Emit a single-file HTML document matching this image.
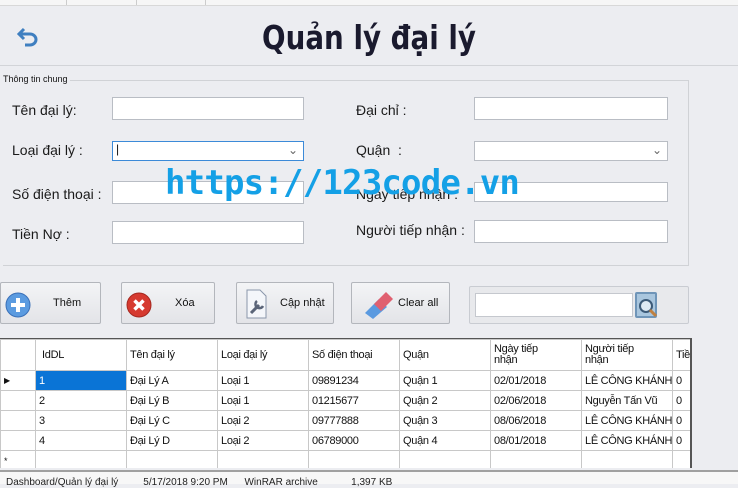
<!DOCTYPE html>
<html><head><meta charset="utf-8"><style>
*{box-sizing:border-box;margin:0;padding:0}
body{width:738px;height:484px;overflow:hidden;background:#ecedf1;font-family:"Liberation Sans","DejaVu Sans",sans-serif;position:relative;color:#111}
.a{position:absolute}
.tb{background:#fff;border:1px solid #b9bdc4;height:23px}
.lbl{font-size:14px;color:#1a1a1a}
.btn{position:absolute;top:282px;height:42px;border:1px solid #b3b6bc;border-radius:2px;background:linear-gradient(#f3f4f6,#e3e4e8);font-size:11px}
.btn span{position:absolute;top:14px}
table{border-collapse:collapse;font-size:11px;letter-spacing:-0.3px}
td{border:1px solid #c8c8c8;height:20px;padding:0 3px;white-space:nowrap;overflow:hidden}
</style></head><body>
<div class="a" style="left:0;top:0;width:738px;height:6px;background:#f6f6f6;border-bottom:1px solid #d8d8d8"></div>
<div class="a" style="left:66px;top:0;width:1px;height:5px;background:#ccc"></div>
<div class="a" style="left:136px;top:0;width:1px;height:5px;background:#ccc"></div>
<div class="a" style="left:205px;top:0;width:1px;height:5px;background:#ccc"></div>
<svg class="a" style="left:16px;top:25px" width="26" height="22" viewBox="0 0 26 22"><path d="M8 4 L3 9 L8 14 M3 9 H14 a6 5.5 0 0 1 0 11 H9" fill="none" stroke="#3f7fc0" stroke-width="3"/></svg>
<div class="a" style="left:0;width:738px;top:18px;text-align:center;font-family:'DejaVu Sans',sans-serif;font-weight:bold;font-size:33px;color:#1a1a2e;transform:scaleX(0.84)">Quản lý đại lý</div>
<div class="a" style="left:0;top:65px;width:738px;height:1px;background:#d2d4d8"></div>
<div class="a" style="left:3px;top:80px;width:686px;height:186px;border:1px solid #d0d2d6;border-left:none"></div>
<div class="a" style="left:3px;top:74px;font-size:9px;background:#ecedf1;padding-right:2px">Thông tin chung</div>

<div class="a lbl" style="left:12px;top:102px">Tên đại lý:</div>
<div class="a tb" style="left:112px;top:97px;width:192px"></div>
<div class="a lbl" style="left:12px;top:142px">Loại đại lý :</div>
<div class="a tb" style="left:112px;top:141px;width:192px;height:20px;border-color:#3c8ad8;font-size:12px;padding-left:3px">|<span style="position:absolute;right:5px;top:1px;color:#666">⌄</span></div>
<div class="a lbl" style="left:12px;top:186px">Số điện thoại :</div>
<div class="a tb" style="left:112px;top:181px;width:192px"></div>
<div class="a lbl" style="left:12px;top:226px">Tiền Nợ :</div>
<div class="a tb" style="left:112px;top:221px;width:192px"></div>

<div class="a lbl" style="left:356px;top:102px">Đại chỉ :</div>
<div class="a tb" style="left:474px;top:97px;width:194px"></div>
<div class="a lbl" style="left:356px;top:142px">Quận &nbsp;:</div>
<div class="a tb" style="left:474px;top:141px;width:194px;height:20px"><span style="position:absolute;right:5px;top:1px;color:#666;font-size:12px">⌄</span></div>
<div class="a lbl" style="left:356px;top:186px">Ngày tiếp nhận :</div>
<div class="a tb" style="left:474px;top:182px;width:194px;height:20px"></div>
<div class="a lbl" style="left:356px;top:222px">Người tiếp nhận :</div>
<div class="a tb" style="left:474px;top:220px;width:194px"></div>

<div class="a" style="left:165px;top:163px;font-family:'DejaVu Sans Mono',monospace;font-weight:bold;font-size:34px;color:#14a0e6;letter-spacing:-0.8px">https://123code.vn</div>

<div class="btn" style="left:0;width:101px"><svg class="a" style="left:4px;top:9px" width="26" height="26"><circle cx="13" cy="13" r="12" fill="#5b9be0" stroke="#3a70b8"/><path d="M13 6v14M6 13h14" stroke="#fff" stroke-width="4"/></svg><span style="left:52px">Thêm</span></div>
<div class="btn" style="left:121px;width:94px"><svg class="a" style="left:4px;top:9px" width="26" height="26"><circle cx="13" cy="13" r="12" fill="#d63a30" stroke="#a52820"/><path d="M8.5 8.5l9 9M17.5 8.5l-9 9" stroke="#fff" stroke-width="3.5"/></svg><span style="left:53px">Xóa</span></div>
<div class="btn" style="left:236px;width:98px"><svg class="a" style="left:7px;top:5px" width="26" height="32"><path d="M3 2h13l6 6v22H3z" fill="#f4f6fa" stroke="#8a96aa"/><path d="M7 25l8-8" stroke="#5a6478" stroke-width="3"/><path d="M13 13a4 4 0 1 0 6 5" stroke="#5a6478" stroke-width="2.5" fill="none"/></svg><span style="left:43px">Cập nhật</span></div>
<div class="btn" style="left:351px;width:99px"><svg class="a" style="left:10px;top:6px" width="34" height="30"><path d="M3 24l14-14 8 8-14 12z" fill="#5a9ae0"/><path d="M12 15l12-12 7 7-12 12z" fill="#e06070"/></svg><span style="left:46px">Clear all</span></div>
<div class="a" style="left:469px;top:286px;width:220px;height:38px;border:1px solid #c9ccd2;border-radius:2px;background:#e8e9ec"></div>
<div class="a" style="left:475px;top:293px;width:158px;height:24px;background:#fff;border:1px solid #c5c8ce"></div>
<svg class="a" style="left:634px;top:291px" width="28" height="30"><rect x="1" y="1" width="22" height="26" rx="2" fill="#6f95b8"/><rect x="3" y="3" width="18" height="22" fill="#a9c6de"/><circle cx="12" cy="15" r="6" fill="#dde9f3" stroke="#3c5a78" stroke-width="2"/><path d="M16 19l6 6" stroke="#c08040" stroke-width="3"/></svg>

<div class="a" style="left:0;top:338px;width:692px;height:130px;background:#fff;border-top:1px solid #555;border-right:2px solid #555;overflow:hidden">
<table style="width:700px;table-layout:fixed">
<colgroup><col style="width:35px"><col style="width:91px"><col style="width:91px"><col style="width:91px"><col style="width:91px"><col style="width:91px"><col style="width:91px"><col style="width:91px"><col style="width:30px"></colgroup>
<tr style="height:31px"><td></td><td style="padding-left:6px">IdDL</td><td>Tên đại lý</td><td>Loại đại lý</td><td>Số điện thoại</td><td>Quận</td><td style="line-height:11px;white-space:normal">Ngày tiếp<br>nhận</td><td style="line-height:11px;white-space:normal">Người tiếp<br>nhận</td><td>Tiền</td></tr>
<tr><td style="font-size:8px">▶</td><td style="background:#0a74d6;color:#fff">1</td><td>Đại Lý A</td><td>Loại 1</td><td>09891234</td><td>Quận 1</td><td>02/01/2018</td><td>LÊ CÔNG KHÁNH</td><td>0</td></tr>
<tr><td></td><td>2</td><td>Đại Lý B</td><td>Loại 1</td><td>01215677</td><td>Quận 2</td><td>02/06/2018</td><td>Nguyễn Tấn Vũ</td><td>0</td></tr>
<tr><td></td><td>3</td><td>Đại Lý C</td><td>Loại 2</td><td>09777888</td><td>Quận 3</td><td>08/06/2018</td><td>LÊ CÔNG KHÁNH</td><td>0</td></tr>
<tr><td></td><td>4</td><td>Đại Lý D</td><td>Loại 2</td><td>06789000</td><td>Quận 4</td><td>08/01/2018</td><td>LÊ CÔNG KHÁNH</td><td>0</td></tr>
<tr><td style="font-size:9px">*</td><td></td><td></td><td></td><td></td><td></td><td></td><td></td><td></td></tr>
</table></div>
<div class="a" style="left:0;top:470px;width:738px;height:14px;background:#f7f7f7;border-top:2px solid #a0a0a0;font-size:10px;color:#222;padding:5px 6px 0;white-space:nowrap">Dashboard/Quản lý đại lý &nbsp;&nbsp;&nbsp;&nbsp;&nbsp;&nbsp;&nbsp; 5/17/2018 9:20 PM &nbsp;&nbsp;&nbsp;&nbsp; WinRAR archive &nbsp;&nbsp;&nbsp;&nbsp;&nbsp;&nbsp;&nbsp;&nbsp;&nbsp;&nbsp; 1,397 KB</div>
</body></html>
